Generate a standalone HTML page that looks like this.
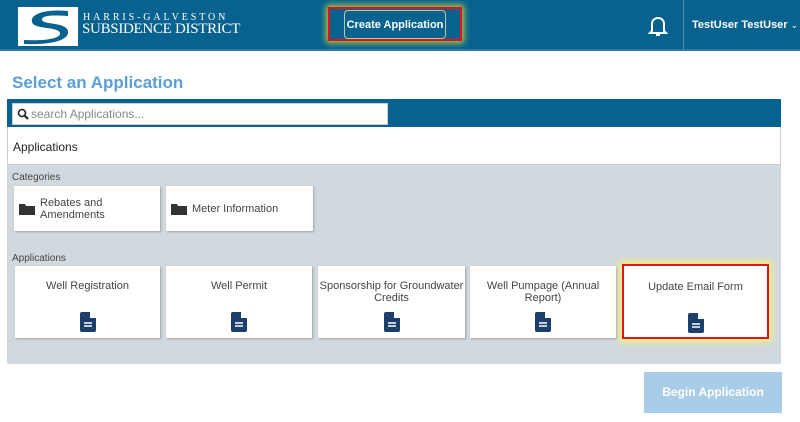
<!DOCTYPE html>
<html><head><style>
*{margin:0;padding:0;box-sizing:border-box}
body{width:800px;height:422px;background:#fff;font-family:"Liberation Sans",Arial,sans-serif;position:relative;overflow:hidden}
.hdr{position:absolute;left:0;top:0;width:800px;height:51px;background:#08628f;border-bottom:2px solid #2d7ba3}
.abs{position:absolute}
.card{position:absolute;background:#fff;box-shadow:1px 1px 2px rgba(0,0,0,.25)}
.app{top:266px;height:72px;font-size:11px;color:#444;text-align:center;padding-top:14px;line-height:12px}
.doc{position:absolute;left:50%;margin-left:-8px;top:46px}
.cat{top:186px;height:45px;font-size:11px;color:#444;line-height:12px}
</style></head><body>
<div class="hdr">
 <div class="abs" style="left:18px;top:7px;width:60px;height:39px;background:#fff">
  <svg width="60" height="39" viewBox="0 0 60 39"><path d="M50 4 C30 2 12 6 14 15 C16 23 40 19 42 26 C43 32 25 34 6 33 L6 37 C30 38 52 34 50 24 C48 15 26 18 24 13 C23 8 36 8 50 9Z" fill="#08628f"/></svg>
 </div>
 <div class="abs" style="left:83px;top:12px;font-family:'Liberation Serif',serif;color:#fff;font-size:10px;letter-spacing:2.9px">HARRIS-GALVESTON</div>
 <div class="abs" style="left:82px;top:21px;font-family:'Liberation Serif',serif;color:#fff;font-size:15px;letter-spacing:-0.3px">SUBSIDENCE DISTRICT</div>
 <div class="abs" style="left:328px;top:7px;width:134px;height:34px;border:2px solid #e2141a;box-shadow:0 0 6px 2px #b9c642"></div>
 <div class="abs" style="left:344px;top:10px;width:102px;height:29px;border:1px solid #b9c9a0;border-radius:4px;color:#fff;font-size:11px;font-weight:bold;text-align:center;line-height:29px">Create Application</div>
 <svg class="abs" style="left:648px;top:15px" width="20" height="22" viewBox="0 0 20 22"><path d="M4 16 L4 9 C4 5 7 3 10 3 C13 3 16 5 16 9 L16 16 L18 18 L2 18 Z" fill="none" stroke="#fff" stroke-width="2"/><path d="M8 20 h4" stroke="#fff" stroke-width="2"/></svg>
 <div class="abs" style="left:683px;top:0;width:1px;height:51px;background:#4d8fb1"></div>
 <div class="abs" style="left:692px;top:19px;color:#fff;font-size:11px;font-weight:bold">TestUser TestUser <span style="font-weight:normal;font-size:9px">&#8964;</span></div>
</div>
<div class="abs" style="left:12px;top:73px;color:#5a9fd6;font-size:17px;font-weight:bold">Select an Application</div>
<div class="abs" style="left:7px;top:99px;width:774px;height:28px;background:#08628f"></div>
<div class="abs" style="left:12px;top:103px;width:376px;height:22px;background:#fff;border:1px solid #ccc;font-size:12px;color:#888;line-height:20px;padding-left:18px">search Applications...
 <svg class="abs" style="left:4px;top:4px" width="12" height="12" viewBox="0 0 12 12"><circle cx="5" cy="5" r="3.5" fill="none" stroke="#222" stroke-width="1.6"/><path d="M7.5 7.5 L11 11" stroke="#222" stroke-width="2"/></svg>
</div>
<div class="abs" style="left:7px;top:127px;width:774px;height:38px;background:#fff;border:1px solid #ccc;border-top:none;font-size:12px;color:#222;padding:13px 0 0 5px">Applications</div>
<div class="abs" style="left:7px;top:165px;width:774px;height:199px;background:#d1d9de"></div>
<div class="abs" style="left:12px;top:172px;font-size:10px;color:#444">Categories</div>
<div class="card cat" style="left:14px;width:146px">
 <svg class="abs" style="left:5px;top:17px" width="16" height="12"><path d="M0 1 h6 l1 2 h9 v9 h-16z" fill="#333"/></svg>
 <div class="abs" style="left:26px;top:11px">Rebates and<br>Amendments</div></div>
<div class="card cat" style="left:166px;width:147px">
 <svg class="abs" style="left:5px;top:17px" width="16" height="12"><path d="M0 1 h6 l1 2 h9 v9 h-16z" fill="#333"/></svg>
 <div class="abs" style="left:26px;top:17px">Meter Information</div></div>
<div class="abs" style="left:12px;top:253px;font-size:10px;color:#444">Applications</div>
<div class="card app" style="left:15px;width:145px">Well Registration<svg class="doc" width="16" height="20" viewBox="0 0 16 20"><path d="M2 0 h8 l6 6 v12 a2 2 0 0 1 -2 2 h-12 a2 2 0 0 1 -2 -2 v-16 a2 2 0 0 1 2 -2z" fill="#1d3f6c"/><path d="M10 0 v6 h6" fill="#fff"/><path d="M4 11 h8 M4 14 h8" stroke="#fff" stroke-width="1.5"/></svg></div>
<div class="card app" style="left:166px;width:146px">Well Permit<svg class="doc" width="16" height="20" viewBox="0 0 16 20"><path d="M2 0 h8 l6 6 v12 a2 2 0 0 1 -2 2 h-12 a2 2 0 0 1 -2 -2 v-16 a2 2 0 0 1 2 -2z" fill="#1d3f6c"/><path d="M10 0 v6 h6" fill="#fff"/><path d="M4 11 h8 M4 14 h8" stroke="#fff" stroke-width="1.5"/></svg></div>
<div class="card app" style="left:318px;width:147px">Sponsorship for Groundwater<br>Credits<svg class="doc" width="16" height="20" viewBox="0 0 16 20"><path d="M2 0 h8 l6 6 v12 a2 2 0 0 1 -2 2 h-12 a2 2 0 0 1 -2 -2 v-16 a2 2 0 0 1 2 -2z" fill="#1d3f6c"/><path d="M10 0 v6 h6" fill="#fff"/><path d="M4 11 h8 M4 14 h8" stroke="#fff" stroke-width="1.5"/></svg></div>
<div class="card app" style="left:470px;width:146px">Well Pumpage (Annual<br>Report)<svg class="doc" width="16" height="20" viewBox="0 0 16 20"><path d="M2 0 h8 l6 6 v12 a2 2 0 0 1 -2 2 h-12 a2 2 0 0 1 -2 -2 v-16 a2 2 0 0 1 2 -2z" fill="#1d3f6c"/><path d="M10 0 v6 h6" fill="#fff"/><path d="M4 11 h8 M4 14 h8" stroke="#fff" stroke-width="1.5"/></svg></div>
<div class="card app" style="left:622px;top:264px;width:147px;height:75px;border:2px solid #e2141a;box-shadow:0 0 6px 3px #f3f080;padding-top:15px">Update Email Form<svg class="doc" width="16" height="20" viewBox="0 0 16 20" style="top:47px"><path d="M2 0 h8 l6 6 v12 a2 2 0 0 1 -2 2 h-12 a2 2 0 0 1 -2 -2 v-16 a2 2 0 0 1 2 -2z" fill="#1d3f6c"/><path d="M10 0 v6 h6" fill="#fff"/><path d="M4 11 h8 M4 14 h8" stroke="#fff" stroke-width="1.5"/></svg></div>
<div class="abs" style="left:644px;top:372px;width:138px;height:41px;background:#a9cde8;color:#fff;font-size:12px;font-weight:bold;text-align:center;line-height:41px">Begin Application</div>
</body></html>
